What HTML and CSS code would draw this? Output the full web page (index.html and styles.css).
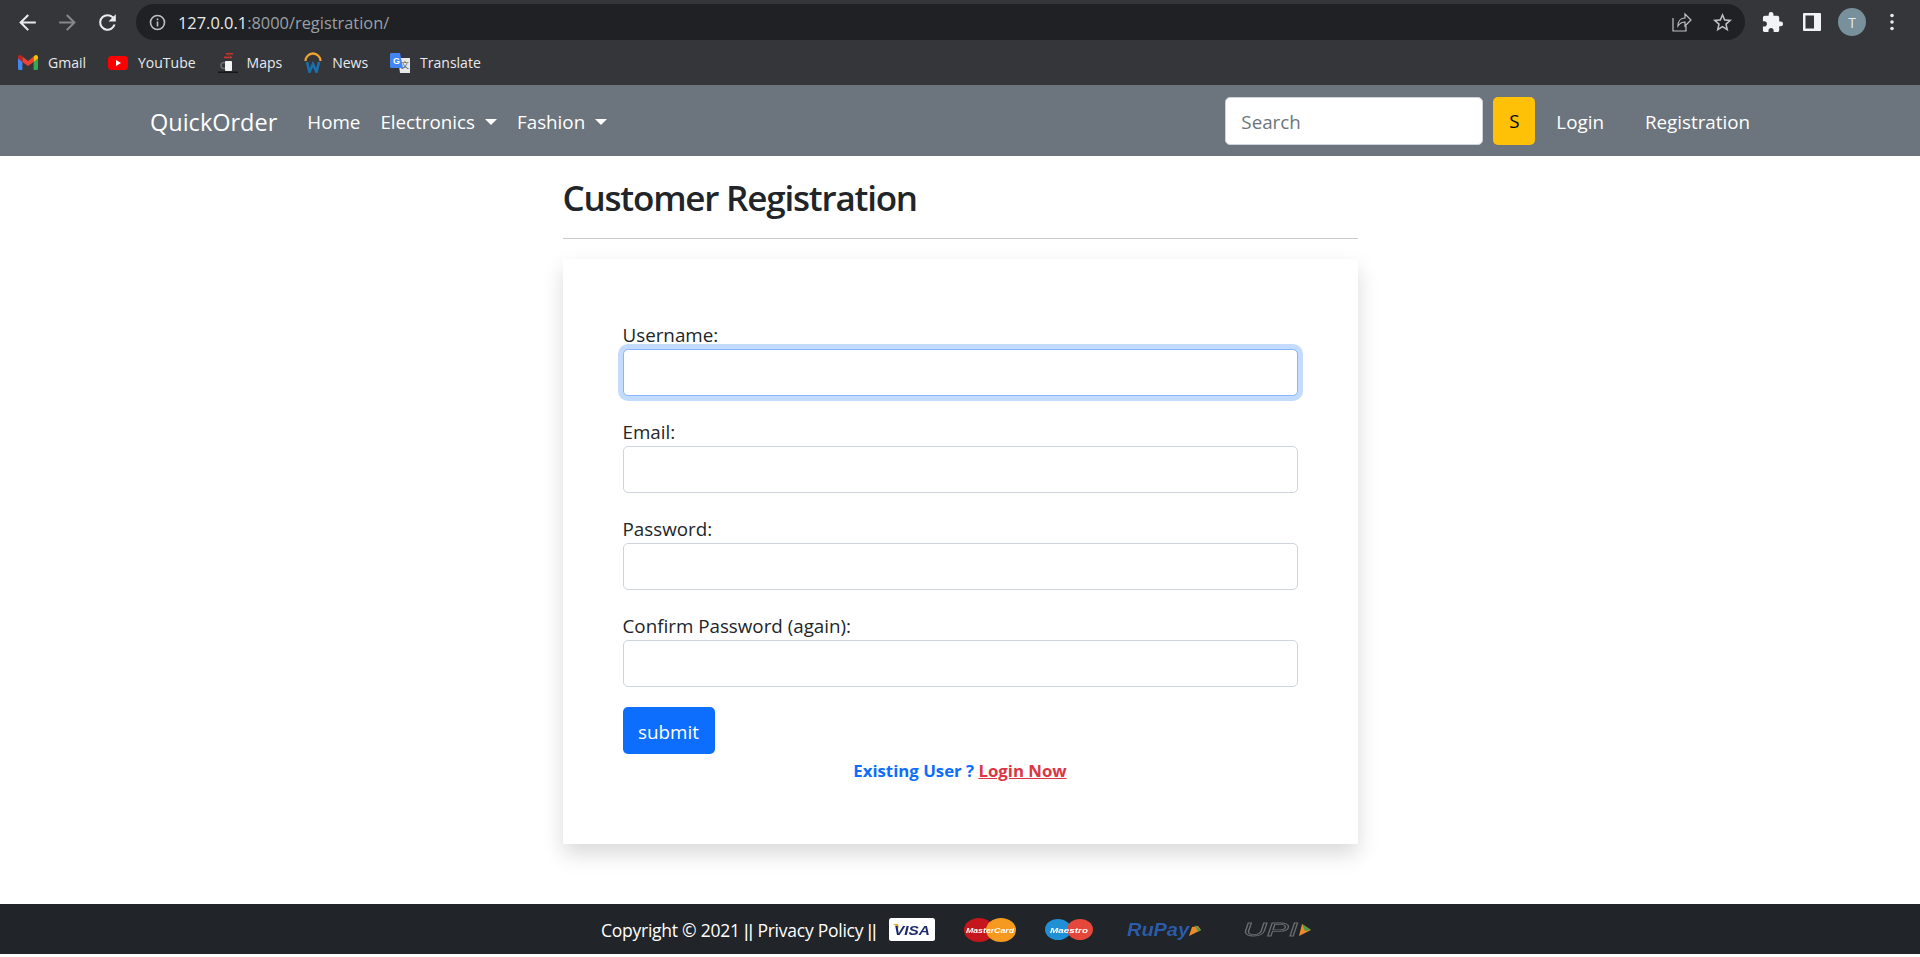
FILE: index.html
```html
<!DOCTYPE html>
<html lang="en">
<head>
<meta charset="utf-8">
<title>Customer Registration</title>
<link rel="stylesheet" href="styles.css">
</head>
<body>
<header class="browser">
  <div class="toolbar">
    <span class="tool"><svg width="25" height="25" viewBox="0 0 24 24"><path fill="#e8eaed" d="M20 11H7.8l5.6-5.6L12 4l-8 8 8 8 1.4-1.4L7.8 13H20z"/></svg></span>
    <span class="tool"><svg width="25" height="25" viewBox="0 0 24 24"><path fill="#85878a" d="M4 11h12.2l-5.6-5.6L12 4l8 8-8 8-1.4-1.4 5.6-5.6H4z"/></svg></span>
    <span class="tool"><svg width="25" height="25" viewBox="0 0 24 24"><path fill="#e8eaed" d="M17.65 6.35A7.96 7.96 0 0 0 12 4a8 8 0 1 0 7.73 10h-2.08A6 6 0 1 1 12 6c1.66 0 3.14.69 4.22 1.78L13 11h7V4z"/></svg></span>
    <div class="omnibox">
      <svg class="info" width="17" height="17" viewBox="0 0 17 17"><circle cx="8.5" cy="8.5" r="7" fill="none" stroke="#bdc1c6" stroke-width="1.6"/><path fill="#bdc1c6" d="M7.7 7.4h1.6v5H7.7zM7.7 4.6h1.6v1.6H7.7z"/></svg>
      <span class="url"><span class="url-host">127.0.0.1</span>:8000/registration/</span>
      <svg class="share" width="20" height="20" viewBox="0 0 20 20"><path fill="none" stroke="#bdc1c6" stroke-width="1.2" d="M1 6v13h13v-5M6 14c0-5 3-8 7-8V2l6 6-6 6v-4c-3 0-5 1-7 4z"/></svg>
      <svg class="star" width="23" height="23" viewBox="0 0 24 24"><path fill="#bdc1c6" d="M22 9.24l-7.19-.62L12 2 9.19 8.63 2 9.24l5.46 4.73L5.82 21 12 17.27 18.18 21l-1.63-7.03L22 9.24zM12 15.4l-3.76 2.27 1-4.28-3.32-2.88 4.38-.38L12 6.1l1.71 4.04 4.38.38-3.32 2.88 1 4.28L12 15.4z"/></svg>
    </div>
    <span class="tool"><svg width="23" height="23" viewBox="0 0 24 24"><path fill="#f1f3f4" d="M20.5 11H19V7c0-1.1-.9-2-2-2h-4V3.5a2.5 2.5 0 0 0-5 0V5H4c-1.1 0-1.99.9-1.99 2v3.8H3.5c1.49 0 2.7 1.21 2.7 2.7s-1.21 2.7-2.7 2.7H2V20c0 1.1.9 2 2 2h3.8v-1.5c0-1.49 1.21-2.7 2.7-2.7 1.49 0 2.7 1.21 2.7 2.7V22H17c1.1 0 2-.9 2-2v-4h1.5a2.5 2.5 0 0 0 0-5z"/></svg></span>
    <span class="tool"><svg width="18" height="18" viewBox="0 0 18 18"><rect width="18" height="18" rx="1" fill="#f1f3f4"/><rect x="2.5" y="2.5" width="8.5" height="13" fill="#35363a"/></svg></span>
    <span class="tool"><span class="avatar">T</span></span>
    <span class="tool"><svg width="4" height="18" viewBox="0 0 4 18"><circle cx="2" cy="2.5" r="1.8" fill="#e8eaed"/><circle cx="2" cy="9" r="1.8" fill="#e8eaed"/><circle cx="2" cy="15.5" r="1.8" fill="#e8eaed"/></svg></span>
  </div>
  <div class="bookmarks">
    <span class="bookmark"><svg width="20" height="15" viewBox="0 0 20 15"><path fill="#4285f4" d="M0 2v11.5c0 .8.6 1.5 1.4 1.5h3V7z"/><path fill="#34a853" d="M15.600 7v8h3c.8 0 1.400-.7 1.400-1.500V2z"/><path fill="#ea4335" d="M4.400 7V1.500L10 6l5.600-4.500V7L10 11z"/><path fill="#c5221f" d="M0 2c0-1.700 2-2.600 3.200-1.600l1.200 1.100V7L0 3.500z"/><path fill="#fbbc04" d="M20 2c0-1.700-2-2.600-3.200-1.600l-1.200 1.100V7L20 3.500z"/></svg>Gmail</span>
    <span class="bookmark"><svg width="20" height="14" viewBox="0 0 20 14"><rect width="20" height="14" rx="3.500" fill="#ff0000"/><path fill="#fff" d="M8 4l5 3-5 3z"/></svg>YouTube</span>
    <span class="bookmark maps"><svg width="20" height="20" viewBox="0 0 20 20"><path fill="#c9352f" d="M8 0h7v1.600H8zM6 3.600h8v1.600H6z"/><path fill="#7c2d2a" d="M9 1.600h3v2H9z"/><circle cx="6" cy="12.500" r="3" fill="none" stroke="#6a6d70" stroke-width="1.500"/><rect x="7" y="8" width="7" height="10" rx="1" fill="#f4f4f4"/><path fill="#16171a" d="M0 18.500h20V20H0z"/></svg>Maps</span>
    <span class="bookmark"><svg width="18" height="21" viewBox="0 0 18 21"><path fill="none" stroke="#f0a22e" stroke-width="2.300" d="M1.500 9a7.500 7.500 0 0 1 15 0"/><path fill="none" stroke="#1a6fae" stroke-width="2.600" d="M3 10l2.500 10 3.500-8 3.500 8 2.500-10"/></svg>News</span>
    <span class="bookmark"><svg width="20" height="20" viewBox="0 0 20 20"><path fill="#e8e8e8" d="M8 5h12v15H10z"/><text class="fav-zh" x="11" y="15">文</text><path fill="#4285f4" d="M1.500 0H10l3 15H1.500C.7 15 0 14.300 0 13.500V1.500C0 .7.700 0 1.500 0z"/><text class="fav-g" x="3" y="10.500">G</text></svg>Translate</span>
  </div>
</header>

<nav class="navbar">
  <a class="brand">QuickOrder</a>
  <a class="nav-link">Home</a>
  <a class="nav-link dropdown">Electronics</a>
  <a class="nav-link dropdown">Fashion</a>
  <form class="search">
    <span class="search-input">Search</span>
    <span class="search-btn">S</span>
  </form>
  <a class="nav-link login">Login</a>
  <a class="nav-link register">Registration</a>
</nav>

<main class="content">
  <h2 class="title">Customer Registration</h2>
  <hr class="rule">
  <section class="card">
    <div class="field"><label class="label">Username:</label><div class="input focus"></div></div>
    <div class="field"><label class="label">Email:</label><div class="input"></div></div>
    <div class="field"><label class="label">Password:</label><div class="input"></div></div>
    <div class="field"><label class="label">Confirm Password (again):</label><div class="input"></div></div>
    <span class="submit">submit</span>
    <p class="existing">Existing User ? <a class="login-now">Login Now</a></p>
  </section>
</main>

<footer class="footer">
  <span class="copy">Copyright © 2021 <span class="pipes">||</span> Privacy Policy <span class="pipes">||</span></span>
  <svg class="pay visa" width="46" height="23" viewBox="0 0 46 23"><rect width="46" height="23" rx="2.500" fill="#fff"/><path fill="#e0a526" d="M4 6h5l1 4z"/><text class="visa-text" x="5" y="17" textLength="36" lengthAdjust="spacingAndGlyphs">VISA</text></svg>
  <svg class="pay mc" width="52" height="24" viewBox="0 0 52 24"><ellipse cx="15" cy="12" rx="15" ry="12" fill="#c4161c"/><ellipse cx="37" cy="12" rx="15" ry="12" fill="#f59a1f"/><text class="mc-text" x="2" y="15" textLength="48" lengthAdjust="spacingAndGlyphs">MasterCard</text></svg>
  <svg class="pay maestro" width="48" height="21" viewBox="0 0 48 21"><ellipse cx="13" cy="10.500" rx="13" ry="10.500" fill="#1f8fd6"/><ellipse cx="35" cy="10.500" rx="13" ry="10.500" fill="#e5483a"/><text class="mc-text" x="5" y="14" textLength="38" lengthAdjust="spacingAndGlyphs">Maestro</text></svg>
  <svg class="pay rupay" width="76" height="16" viewBox="0 0 76 16"><text class="rupay-text" x="0" y="13.500" textLength="62" lengthAdjust="spacingAndGlyphs">RuPay</text><path fill="#ef8a2b" d="M62 14l3-9 6-1 3 4z"/><path fill="#4f9a46" d="M68 3l6 5-3 2z"/></svg>
  <svg class="pay upi" width="69" height="16" viewBox="0 0 69 16"><text class="upi-text" x="0" y="14" textLength="55" lengthAdjust="spacingAndGlyphs">UPI</text><path fill="#ef8a2b" d="M56 14l3-12 9 6z"/><path fill="#4f9a46" d="M59 2l9 6-6 1z"/></svg>
</footer>
</body>
</html>
```

FILE: styles.css
```css
* { box-sizing: border-box; }
html, body { margin: 0; padding: 0; }
body {
  height: 957px;
  overflow: hidden;
  background: #fff;
  color: #212529;
  font-family: "Open Sans", "Noto Sans", sans-serif;
  font-size: 18.8px;
}

/* Browser chrome */
.browser { background: #35363a; height: 85px; color: #e8eaed; }
.toolbar { height: 43px; padding: 4px 8px 0 7px; display: flex; align-items: flex-start; }
.tool { width: 40px; height: 36px; display: flex; align-items: center; justify-content: center; flex: none; }
.avatar {
  width: 28px; height: 28px; border-radius: 50%;
  background: #78909c; color: #e8eaed;
  display: flex; align-items: center; justify-content: center;
  font-size: 14px;
}
.omnibox {
  flex: 1; height: 36px; margin: 0 7px 0 9px; padding: 0 11px 0 13px;
  background: #202124; border-radius: 18px;
  display: flex; align-items: center;
}
.info { margin-right: 12px; flex: none; }
.url { font-size: 16.4px; color: #9aa0a6; flex: 1; }
.url-host { color: #e8eaed; }
.share { margin-right: 19px; }
.bookmarks { height: 42px; padding: 0 0 3px 18px; display: flex; align-items: center; gap: 22px; }
.bookmark { display: flex; align-items: center; font-size: 14px; color: #e8eaed; }
.bookmark svg { margin-right: 10px; flex: none; }
.bookmark.maps svg { margin-right: 9px; }
.fav-zh { font-size: 8px; fill: #555; font-family: "Noto Sans CJK SC", sans-serif; }
.fav-g { font-size: 9px; fill: #fff; font-weight: 700; font-family: "Liberation Sans", sans-serif; }

/* Navbar */
.navbar {
  height: 71px; background: #6c757d;
  padding: 1px 170px 0 150px;
  display: flex; align-items: center;
}
.brand { font-size: 23.500px; color: #fff; margin-right: 30px; padding-top: 1px; }
.nav-link { color: #fff; margin-right: 20px; padding-top: 2px; }
.dropdown { display: flex; align-items: center; }
.dropdown::after {
  content: ""; margin-left: 10px;
  border-top: 6px solid #fff; border-left: 6px solid transparent; border-right: 6px solid transparent;
}
.search { margin-left: auto; display: flex; gap: 10px; margin-right: 21px; }
.search-input {
  width: 258px; height: 47.500px; padding: 1px 15px 0;
  background: #fff; border: 1px solid #ced4da; border-radius: 5px;
  color: #6c757d; display: flex; align-items: center;
}
.search-btn {
  width: 42px; height: 47.500px; background: #ffc107; color: #000; border-radius: 5px;
  display: flex; align-items: center; justify-content: center;
}
.login { margin-right: 41px; }
.register { margin-right: 0; }

/* Main */
.content { width: 795px; margin: 0 auto; height: 748px; padding-top: 18px; }
.title { margin: 0; font-size: 35px; line-height: 48px; font-weight: 600; letter-spacing: -1.200px; color: #212529; }
.rule { margin: 16px 0 20px; border: 0; border-top: 1px solid #c8c8c8; }
.card {
  height: 585px; padding: 60px 60px 0;
  background: #fff;
  box-shadow: 0 10px 20px rgba(0, 0, 0, .15);
}
.field { margin-bottom: 20px; }
.label { display: block; height: 30px; line-height: 32px; color: #212529; }
.input { height: 47px; background: #fff; border: 1px solid #ced4da; border-radius: 5px; }
.focus { border-color: #86b7fe; box-shadow: 0 0 0 5px rgba(13, 110, 253, .25); }
.submit {
  display: flex; align-items: center; justify-content: center;
  width: 92px; height: 47px; padding-top: 2px;
  background: #0d6efd; color: #fff; border-radius: 5px;
}
.existing { margin: 4px 0 0; text-align: center; font-size: 16.800px; line-height: 26px; font-weight: 700; color: #0d6efd; }
.login-now { color: #dc3545; text-decoration: underline; }

/* Footer */
.footer {
  height: 50px; background: #212529; color: #fff;
  display: flex; align-items: center; padding: 1px 0 0 601px;
}
.copy { margin-right: 12px; white-space: nowrap; font-size: 17.500px; letter-spacing: -.25px; }
.pipes { font-family: "Liberation Sans", sans-serif; letter-spacing: 0; }
.pay { flex: none; filter: blur(.5px); overflow: visible; }
.mc { margin-left: 29px; }
.maestro { margin-left: 29px; }
.rupay { margin-left: 34px; }
.upi { margin-left: 40px; }
.visa-text { font: italic 700 13px "Liberation Sans", sans-serif; fill: #1a2a6c; }
.mc-text { font: italic 700 8px "Liberation Sans", sans-serif; fill: #fff; }
.rupay-text { font: italic 700 18px "Liberation Sans", sans-serif; fill: #2a5caa; }
.upi-text { font: italic 400 19px "Liberation Sans", sans-serif; fill: none; stroke: #6b6e72; stroke-width: .8; }
```
